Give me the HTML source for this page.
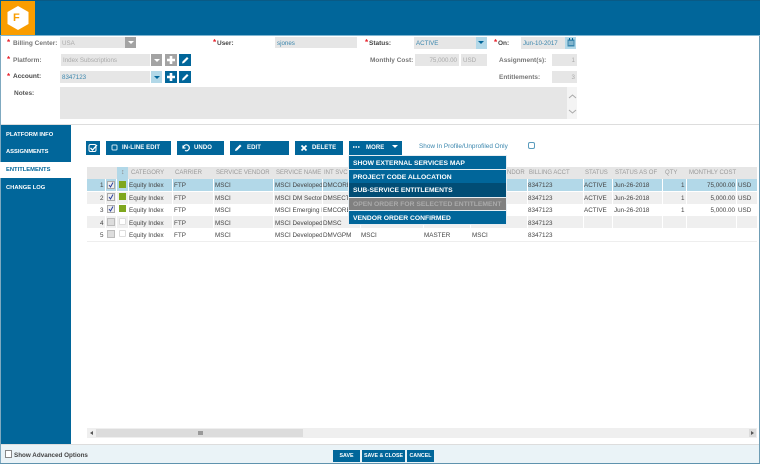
<!DOCTYPE html>
<html><head><meta charset="utf-8">
<style>
html,body{margin:0;padding:0;background:#fff}
#p{position:relative;width:760px;height:464px;overflow:hidden;background:#fff;font-family:"Liberation Sans",sans-serif;font-size:7px;color:#444}
#p div,#p svg{position:absolute}
.t{white-space:nowrap;line-height:10px}
.l{font-weight:bold;color:#444;font-size:6.5px;margin-top:1px}
.o{color:#777;font-weight:bold;font-size:6.5px;margin-top:1px}
.r{color:#e8202a;font-weight:bold;font-size:8px}
.f{background:#e6e6e6;color:#3a86ad;padding-left:2px;box-sizing:border-box;line-height:14px;font-size:6.2px;white-space:nowrap}
.g{color:#aaa}
.ra{text-align:right;padding-right:2px;padding-left:0}
.b{background:#01669a;color:#fff;font-weight:bold;font-size:6px;line-height:15px;height:14px;box-sizing:border-box;white-space:nowrap;letter-spacing:.1px}
.m{left:349px;width:157px;height:13px;background:#01669a;color:#fff;font-weight:bold;font-size:6.75px;line-height:15px;padding-left:4px;box-sizing:border-box;white-space:nowrap;overflow:hidden}
.s{left:0;width:71px;height:16px;color:#fff;font-weight:bold;font-size:5.8px;line-height:16px;padding-left:6px;box-sizing:border-box}
.h{color:#999;font-size:6px;line-height:13px;top:167px;white-space:nowrap}
.c{font-size:6.3px;color:#444;line-height:13px;white-space:nowrap}
.row{left:87px;width:670px;height:12px}
.v{width:1px;background:#fff;top:179px;height:62px}
.k{left:107px;width:8px;height:8px;background:#eee;border:1px solid #aaa;box-sizing:border-box}
.e{left:107px;width:8px;height:8px;background:#ddd;border:1px solid #bbb;box-sizing:border-box}
.n{left:119px;width:7px;height:7px;background:#7fa71e}
.w{left:119px;width:7px;height:7px;background:#fff;border:1px solid #ddd;border-radius:1px;box-sizing:border-box}
.sb{top:450px;height:12px;line-height:12px;text-align:center;font-size:5.3px;letter-spacing:0}
</style></head><body><div id="p">
<div style="left:0;top:0;width:760px;height:35px;background:#01669a;border-top:1px solid #0a5a85;box-sizing:border-box"></div>
<div style="left:0;top:35px;width:760px;height:1px;background:#7fb6d2"></div>
<div style="left:1px;top:1px;width:34px;height:34px;background:#f99d00"></div>
<svg style="left:6px;top:5px" width="24" height="26" viewBox="0 0 24 26"><path d="M12 1 L22.5 7 V19 L12 25 L1.500 19 V7 Z" fill="#fff"/></svg>
<div class="t" style="left:13px;top:12px;color:#f99d00;font-weight:bold;font-size:11px;line-height:12px">F</div>
<div style="left:0;top:36px;width:1px;height:428px;background:#7fa9c0"></div>
<div style="left:759px;top:36px;width:1px;height:428px;background:#6f9db5"></div>

<div class="t r" style="left:7px;top:38px">*</div><div class="t o" style="left:13px;top:38px">Billing Center:</div>
<div class="t r" style="left:7px;top:55px">*</div><div class="t o" style="left:13px;top:55px">Platform:</div>
<div class="t r" style="left:7px;top:72px">*</div><div class="t l" style="left:13px;top:71px">Account:</div>
<div class="t o" style="left:14px;top:88px;color:#555">Notes:</div>

<div class="f g" style="left:60px;top:37px;width:65px;height:11px">USA</div>
<div style="left:125px;top:37px;width:11px;height:11px;background:#a3a3a3"></div>
<svg style="left:128px;top:41px" width="6" height="4"><path d="M0 0H6L3 3Z" fill="#fff"/></svg>
<div class="f g" style="left:61px;top:54px;width:89px;height:12px">Index Subscriptions</div>
<div style="left:151px;top:54px;width:11px;height:12px;background:#a3a3a3"></div>
<svg style="left:154px;top:59px" width="6" height="4"><path d="M0 0H6L3 3Z" fill="#fff"/></svg>
<div style="left:165px;top:54px;width:12px;height:12px;background:#a3a3a3"></div>
<svg style="left:165px;top:54px" width="12" height="12"><path d="M6 2V10M2 6H10" stroke="#fff" stroke-width="2.600"/></svg>
<div style="left:179px;top:54px;width:12px;height:12px;background:#01669a"></div>
<svg style="left:179px;top:54px" width="12" height="12"><path d="M3 9.500L3.500 7.500L8 3L9.500 4.500L5 9Z" fill="#fff"/></svg>
<div class="f" style="left:60px;top:71px;width:90px;height:12px">8347123</div>
<div style="left:151px;top:71px;width:11px;height:12px;background:#b2d8e8"></div>
<svg style="left:154px;top:76px" width="6" height="4"><path d="M0 0H6L3 3Z" fill="#01669a"/></svg>
<div style="left:165px;top:71px;width:12px;height:12px;background:#01669a"></div>
<svg style="left:165px;top:71px" width="12" height="12"><path d="M6 2V10M2 6H10" stroke="#fff" stroke-width="2.600"/></svg>
<div style="left:179px;top:71px;width:12px;height:12px;background:#01669a"></div>
<svg style="left:179px;top:71px" width="12" height="12"><path d="M3 9.500L3.500 7.500L8 3L9.500 4.500L5 9Z" fill="#fff"/></svg>
<div style="left:60px;top:87px;width:507px;height:32px;background:#e6e6e6"></div>
<div style="left:567px;top:87px;width:10px;height:32px;background:#f4f4f4"></div>
<svg style="left:568px;top:93px" width="9" height="24"><path d="M1 5L4.500 2L8 5M1 17L4.500 20L8 17" fill="none" stroke="#aaa" stroke-width="1"/></svg>

<div class="t r" style="left:213px;top:38px">*</div><div class="t l" style="left:217px;top:38px">User:</div>
<div class="f" style="left:275px;top:37px;width:82px;height:11px;line-height:13px">sjones</div>
<div class="t r" style="left:365px;top:38px">*</div><div class="t l" style="left:369px;top:38px">Status:</div>
<div class="f" style="left:414px;top:37px;width:62px;height:12px">ACTIVE</div>
<div style="left:476px;top:37px;width:11px;height:12px;background:#b2d8e8"></div>
<svg style="left:478px;top:41px" width="6" height="4"><path d="M0 0H6L3 3Z" fill="#01669a"/></svg>
<div class="t o" style="left:370px;top:55px">Monthly Cost:</div>
<div class="f g ra" style="left:415px;top:54px;width:44px;height:12px;line-height:13px">75,000.00</div>
<div class="f g" style="left:461px;top:54px;width:26px;height:12px;line-height:13px">USD</div>
<div class="t r" style="left:494px;top:38px">*</div><div class="t l" style="left:498px;top:38px">On:</div>
<div class="f" style="left:521px;top:37px;width:44px;height:12px;line-height:13px">Jun-10-2017</div>
<div style="left:565px;top:37px;width:11px;height:12px;background:#b2d8e8"></div>
<svg style="left:567px;top:38px" width="8" height="9"><rect x=".5" y="1.500" width="7" height="7" fill="#3a86ad"/><rect x="1.500" y="3.500" width="5" height="1" fill="#cfe6f0"/><rect x="1.500" y="5.500" width="5" height="1" fill="#cfe6f0"/><rect x="2" y="0" width="1" height="2" fill="#01669a"/><rect x="5" y="0" width="1" height="2" fill="#01669a"/></svg>
<div class="t o" style="left:499px;top:55px">Assignment(s):</div>
<div class="f g ra" style="left:552px;top:54px;width:25px;height:12px;line-height:13px">1</div>
<div class="t o" style="left:499px;top:72px">Entitlements:</div>
<div class="f g ra" style="left:552px;top:71px;width:25px;height:12px;line-height:13px">3</div>
<div style="left:1px;top:124px;width:758px;height:1px;background:#ddd"></div>

<div style="left:1px;top:125px;width:70px;height:319px;background:#01669a"></div>
<div class="s" style="top:127px">PLATFORM INFO</div>
<div class="s" style="top:144px">ASSIGNMENTS</div>
<div class="s" style="top:162px;background:#fff;color:#01669a">ENTITLEMENTS</div>
<div class="s" style="top:180px">CHANGE LOG</div>

<div class="b" style="left:86px;top:141px;width:14px"></div>
<svg style="left:88px;top:143px" width="10" height="10"><rect x="1" y="1.500" width="7" height="7" rx="1.500" fill="none" stroke="#fff"/><path d="M2.500 5L4.500 7L9 2" fill="none" stroke="#fff" stroke-width="1.300"/></svg>
<div class="b" style="left:106px;top:141px;width:65px;padding-left:16px">IN-LINE EDIT</div>
<svg style="left:111px;top:144px" width="7" height="7"><rect x="1" y="1" width="5" height="5" rx="1" fill="none" stroke="#cfe6f0"/></svg>
<div class="b" style="left:177px;top:141px;width:47px;padding-left:17px">UNDO</div>
<svg style="left:181px;top:143px" width="9" height="9"><path d="M2 2.500V5H4.500M2.300 4.800A3 3 0 1 1 4 7.500" fill="none" stroke="#fff" stroke-width="1.200"/></svg>
<div class="b" style="left:230px;top:141px;width:59px;padding-left:17px">EDIT</div>
<svg style="left:234px;top:143px" width="9" height="9"><path d="M1 8L1.500 6L6 1.500L7.500 3L3 7.500Z" fill="#fff"/></svg>
<div class="b" style="left:295px;top:141px;width:48px;padding-left:17px">DELETE</div>
<svg style="left:300px;top:144px" width="8" height="8"><path d="M1.500 1.500L6.500 6.500M6.500 1.500L1.500 6.500" stroke="#fff" stroke-width="1.800"/></svg>
<div class="b" style="left:349px;top:141px;width:53px;padding-left:17px">MORE</div>
<svg style="left:353px;top:146px" width="8" height="3"><path d="M0 1H7" stroke="#fff" stroke-width="1.400" stroke-dasharray="1.500 1"/></svg>
<svg style="left:392px;top:145px" width="6" height="4"><path d="M0 0H6L3 3Z" fill="#fff"/></svg>
<div class="t" style="left:419px;top:142px;color:#3a86ad;font-size:6.400px">Show In Profile/Unprofiled Only</div>
<div style="left:528px;top:142px;width:7px;height:7px;border:1px solid #5a9cbd;border-radius:2px;box-sizing:border-box"></div>

<div style="left:87px;top:167px;width:670px;height:12px;background:#e6e6e6"></div>
<div style="left:117px;top:167px;width:11px;height:12px;background:#b2d8e8"></div>
<div class="t" style="left:121px;top:167px;color:#888;font-size:7px;line-height:12px;font-weight:bold">↕</div>
<div class="h" style="left:131px">CATEGORY</div>
<div class="h" style="left:175px">CARRIER</div>
<div class="h" style="left:216px">SERVICE VENDOR</div>
<div class="h" style="left:276px">SERVICE NAME</div>
<div class="h" style="left:324px">INT SVC</div>
<div class="h" style="left:507px">NDOR</div>
<div class="h" style="left:529px">BILLING ACCT</div>
<div class="h" style="left:585px">STATUS</div>
<div class="h" style="left:615px">STATUS AS OF</div>
<div class="h" style="left:665px">QTY</div>
<div class="h" style="left:689px">MONTHLY COST</div>

<div class="row" style="top:179px;background:#b2d8e8"></div>
<div class="row" style="top:192px;background:#efefef"></div>
<div class="row" style="top:204px;background:#fff"></div>
<div class="row" style="top:216px;background:#efefef"></div>
<div class="row" style="top:229px;background:#fff"></div>
<div style="left:87px;top:241px;width:670px;height:1px;background:#eee"></div>
<div class="v" style="left:105px"></div><div class="v" style="left:116px"></div><div class="v" style="left:128px"></div>
<div class="v" style="left:172px"></div><div class="v" style="left:213px"></div><div class="v" style="left:273px"></div>
<div class="v" style="left:322px"></div><div class="v" style="left:360px"></div><div class="v" style="left:423px"></div>
<div class="v" style="left:470px"></div><div class="v" style="left:527px"></div><div class="v" style="left:583px"></div>
<div class="v" style="left:612px"></div><div class="v" style="left:662px"></div><div class="v" style="left:686px"></div><div class="v" style="left:736px"></div>

<div class="t c" style="left:100px;top:179px">1</div>
<div class="t c" style="left:100px;top:192px">2</div>
<div class="t c" style="left:100px;top:204px">3</div>
<div class="t c" style="left:100px;top:217px">4</div>
<div class="t c" style="left:100px;top:229px">5</div>

<div class="k" style="top:181px"></div>
<svg style="left:107px;top:181px" width="8" height="8"><path d="M2 4L3.500 6L6 1.500" fill="none" stroke="#2a3f9f" stroke-width="1"/></svg>
<div class="k" style="top:193px"></div>
<svg style="left:107px;top:193px" width="8" height="8"><path d="M2 4L3.500 6L6 1.500" fill="none" stroke="#2a3f9f" stroke-width="1"/></svg>
<div class="k" style="top:205px"></div>
<svg style="left:107px;top:205px" width="8" height="8"><path d="M2 4L3.500 6L6 1.500" fill="none" stroke="#2a3f9f" stroke-width="1"/></svg>
<div class="e" style="top:218px"></div>
<div class="e" style="top:230px"></div>

<div class="n" style="top:181px"></div>
<div class="n" style="top:193px"></div>
<div class="n" style="top:205px"></div>
<div class="w" style="top:218px"></div>
<div class="w" style="top:230px"></div>

<div class="t c" style="left:129px;top:179px">Equity Index</div><div class="t c" style="left:174px;top:179px">FTP</div><div class="t c" style="left:215px;top:179px">MSCI</div><div class="t c" style="left:275px;top:179px;width:47px;overflow:hidden">MSCI Developed</div><div class="t c" style="left:323px;top:179px">DMCORE</div>
<div class="t c" style="left:129px;top:192px">Equity Index</div><div class="t c" style="left:174px;top:192px">FTP</div><div class="t c" style="left:215px;top:192px">MSCI</div><div class="t c" style="left:275px;top:192px;width:47px;overflow:hidden">MSCI DM Sector</div><div class="t c" style="left:323px;top:192px">DMSECT</div>
<div class="t c" style="left:129px;top:204px">Equity Index</div><div class="t c" style="left:174px;top:204px">FTP</div><div class="t c" style="left:215px;top:204px">MSCI</div><div class="t c" style="left:275px;top:204px;width:47px;overflow:hidden">MSCI Emerging Mkts</div><div class="t c" style="left:323px;top:204px">EMCORE</div>
<div class="t c" style="left:129px;top:217px">Equity Index</div><div class="t c" style="left:174px;top:217px">FTP</div><div class="t c" style="left:215px;top:217px">MSCI</div><div class="t c" style="left:275px;top:217px;width:47px;overflow:hidden">MSCI Developed</div><div class="t c" style="left:323px;top:217px">DMSC</div>
<div class="t c" style="left:129px;top:229px">Equity Index</div><div class="t c" style="left:174px;top:229px">FTP</div><div class="t c" style="left:215px;top:229px">MSCI</div><div class="t c" style="left:275px;top:229px;width:47px;overflow:hidden">MSCI Developed</div><div class="t c" style="left:323px;top:229px">DMVGPM</div><div class="t c" style="left:361px;top:229px">MSCI</div><div class="t c" style="left:424px;top:229px">MASTER</div><div class="t c" style="left:472px;top:229px">MSCI</div>

<div class="t c" style="left:528px;top:179px">8347123</div><div class="t c" style="left:528px;top:192px">8347123</div><div class="t c" style="left:528px;top:204px">8347123</div><div class="t c" style="left:528px;top:217px">8347123</div><div class="t c" style="left:528px;top:229px">8347123</div>
<div class="t c" style="left:584px;top:179px">ACTIVE</div><div class="t c" style="left:584px;top:192px">ACTIVE</div><div class="t c" style="left:584px;top:204px">ACTIVE</div>
<div class="t c" style="left:614px;top:179px">Jun-26-2018</div><div class="t c" style="left:614px;top:192px">Jun-26-2018</div><div class="t c" style="left:614px;top:204px">Jun-26-2018</div>
<div class="t c" style="left:681px;top:179px">1</div><div class="t c" style="left:681px;top:192px">1</div><div class="t c" style="left:681px;top:204px">1</div>
<div class="t c" style="left:687px;top:179px;width:48px;text-align:right">75,000.00</div><div class="t c" style="left:687px;top:192px;width:48px;text-align:right">5,000.00</div><div class="t c" style="left:687px;top:204px;width:48px;text-align:right">5,000.00</div>
<div class="t c" style="left:738px;top:179px">USD</div><div class="t c" style="left:738px;top:192px">USD</div><div class="t c" style="left:738px;top:204px">USD</div>

<div style="left:348px;top:155px;width:159px;height:70px;background:#e8eef2"></div>
<div class="m" style="top:156px">SHOW EXTERNAL SERVICES MAP</div>
<div class="m" style="top:170px">PROJECT CODE ALLOCATION</div>
<div class="m" style="top:183px;height:14px;line-height:16px;background:#014d75">SUB-SERVICE ENTITLEMENTS</div>
<div class="m" style="top:198px;height:12px;line-height:14px;background:#808080;color:#aaa">OPEN ORDER FOR SELECTED ENTITLEMENT</div>
<div class="m" style="top:211px">VENDOR ORDER CONFIRMED</div>

<div style="left:87px;top:428px;width:670px;height:10px;background:#efefef"></div>
<div style="left:96px;top:429px;width:207px;height:8px;background:#dcdcdc"></div>
<div style="left:749px;top:429px;width:7px;height:8px;background:#dcdcdc"></div>
<svg style="left:90px;top:431px" width="3" height="4"><path d="M3 0V4L0 2Z" fill="#555"/></svg>
<svg style="left:751px;top:431px" width="3" height="4"><path d="M0 0V4L3 2Z" fill="#555"/></svg>
<div style="left:198px;top:431px;width:5px;height:4px;background:#999"></div>
<div style="left:1px;top:444px;width:758px;height:19px;background:#eaf3f7;border-top:1px solid #ddd;box-sizing:border-box"></div>
<div style="left:0;top:463px;width:760px;height:1px;background:#5f93ae"></div>
<div style="left:5px;top:450px;width:7px;height:8px;background:#fff;border:1px solid #888;box-sizing:border-box"></div>
<div class="t l" style="left:14px;top:450px;font-size:6.300px">Show Advanced Options</div>
<div class="b sb" style="left:333px;width:27px">SAVE</div>
<div class="b sb" style="left:362px;width:43px">SAVE &amp; CLOSE</div>
<div class="b sb" style="left:407px;width:27px">CANCEL</div>
</div></body></html>
